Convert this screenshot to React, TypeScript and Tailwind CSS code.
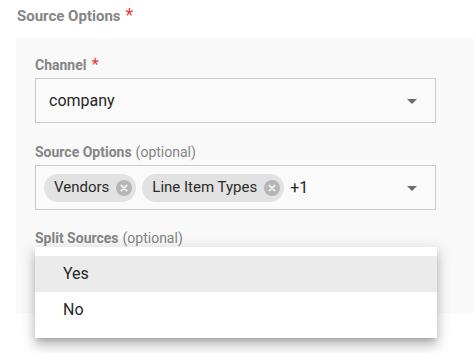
import type { ReactNode } from "react";

function ArrowDrop() {
  return (
    <svg width="24" height="24" viewBox="0 0 24 24" className="shrink-0">
      <path d="M7 10l5 5 5-5z" fill="#6b6b6b" />
    </svg>
  );
}

function ChipClose() {
  return (
    <svg width="16" height="16" viewBox="0 0 16 16" className="shrink-0">
      <circle cx="8" cy="8" r="8" fill="#b5b5b5" />
      <path d="M5.3 5.3l5.4 5.4M10.7 5.3l-5.4 5.4" stroke="#f2f2f2" strokeWidth="1.7" strokeLinecap="round" />
    </svg>
  );
}

function Chip({ label }: { label: string }) {
  return (
    <span className="flex h-[28px] items-center gap-[7px] rounded-full bg-[#e2e2e2] pl-[10px] pr-[4px] text-[15px] text-[#2b2b2b]">
      {label}
      <ChipClose />
    </span>
  );
}

function FieldLabel({ children, required, optional }: { children: ReactNode; required?: boolean; optional?: boolean }) {
  return (
    <div className="mb-[3px] text-[14px] leading-[20px] font-bold text-[#858585]">
      {children}
      {required && <span className="ml-[5px] text-[17px] font-normal text-[#e53935]">*</span>}
      {optional && <span className="ml-[4px] font-normal">(optional)</span>}
    </div>
  );
}

function SelectBox({ children }: { children?: ReactNode }) {
  return (
    <div className="flex h-[45px] items-center justify-between border border-[#cbcbcb] bg-[#fafafa] pr-[11px]">
      {children}
      <ArrowDrop />
    </div>
  );
}

export default function App() {
  return (
    <div className="min-h-screen bg-white pl-[16px] pt-[5px] font-['Roboto',sans-serif]">
      <div className="ml-px text-[15px] leading-[20px] font-bold text-[#858585]">
        Source Options<span className="ml-[5px] text-[18px] font-normal text-[#e53935]">*</span>
      </div>

      <div className="mt-[12px] bg-[#f9f9f9] pt-[16px] pr-[38px] pb-[17px] pl-[19px]">
        <div>
          <FieldLabel required>Channel</FieldLabel>
          <SelectBox>
            <span className="pl-[13px] text-[16px] leading-[24px] text-[#262626]">company</span>
          </SelectBox>
        </div>

        <div className="mt-[19px]">
          <FieldLabel optional>Source Options</FieldLabel>
          <SelectBox>
            <div className="flex items-center gap-[6px] pl-[8px]">
              <Chip label="Vendors" />
              <Chip label="Line Item Types" />
              <span className="text-[16px] text-[#262626]">+1</span>
            </div>
          </SelectBox>
        </div>

        <div className="relative mt-[18px]">
          <FieldLabel optional>Split Sources</FieldLabel>
          <SelectBox />
          <div className="absolute top-[19px] left-0 w-[402px] bg-white pt-[9px] pb-[10px] shadow-[0_5px_5px_-3px_rgba(0,0,0,0.2),0_8px_10px_1px_rgba(0,0,0,0.14),0_3px_14px_2px_rgba(0,0,0,0.12)]">
            <div className="flex h-[36px] items-center bg-[#ebebeb] pl-[28px] text-[16px] text-[#262626]">Yes</div>
            <div className="flex h-[36px] items-center pl-[28px] text-[16px] text-[#262626]">No</div>
          </div>
        </div>
      </div>
    </div>
  );
}
